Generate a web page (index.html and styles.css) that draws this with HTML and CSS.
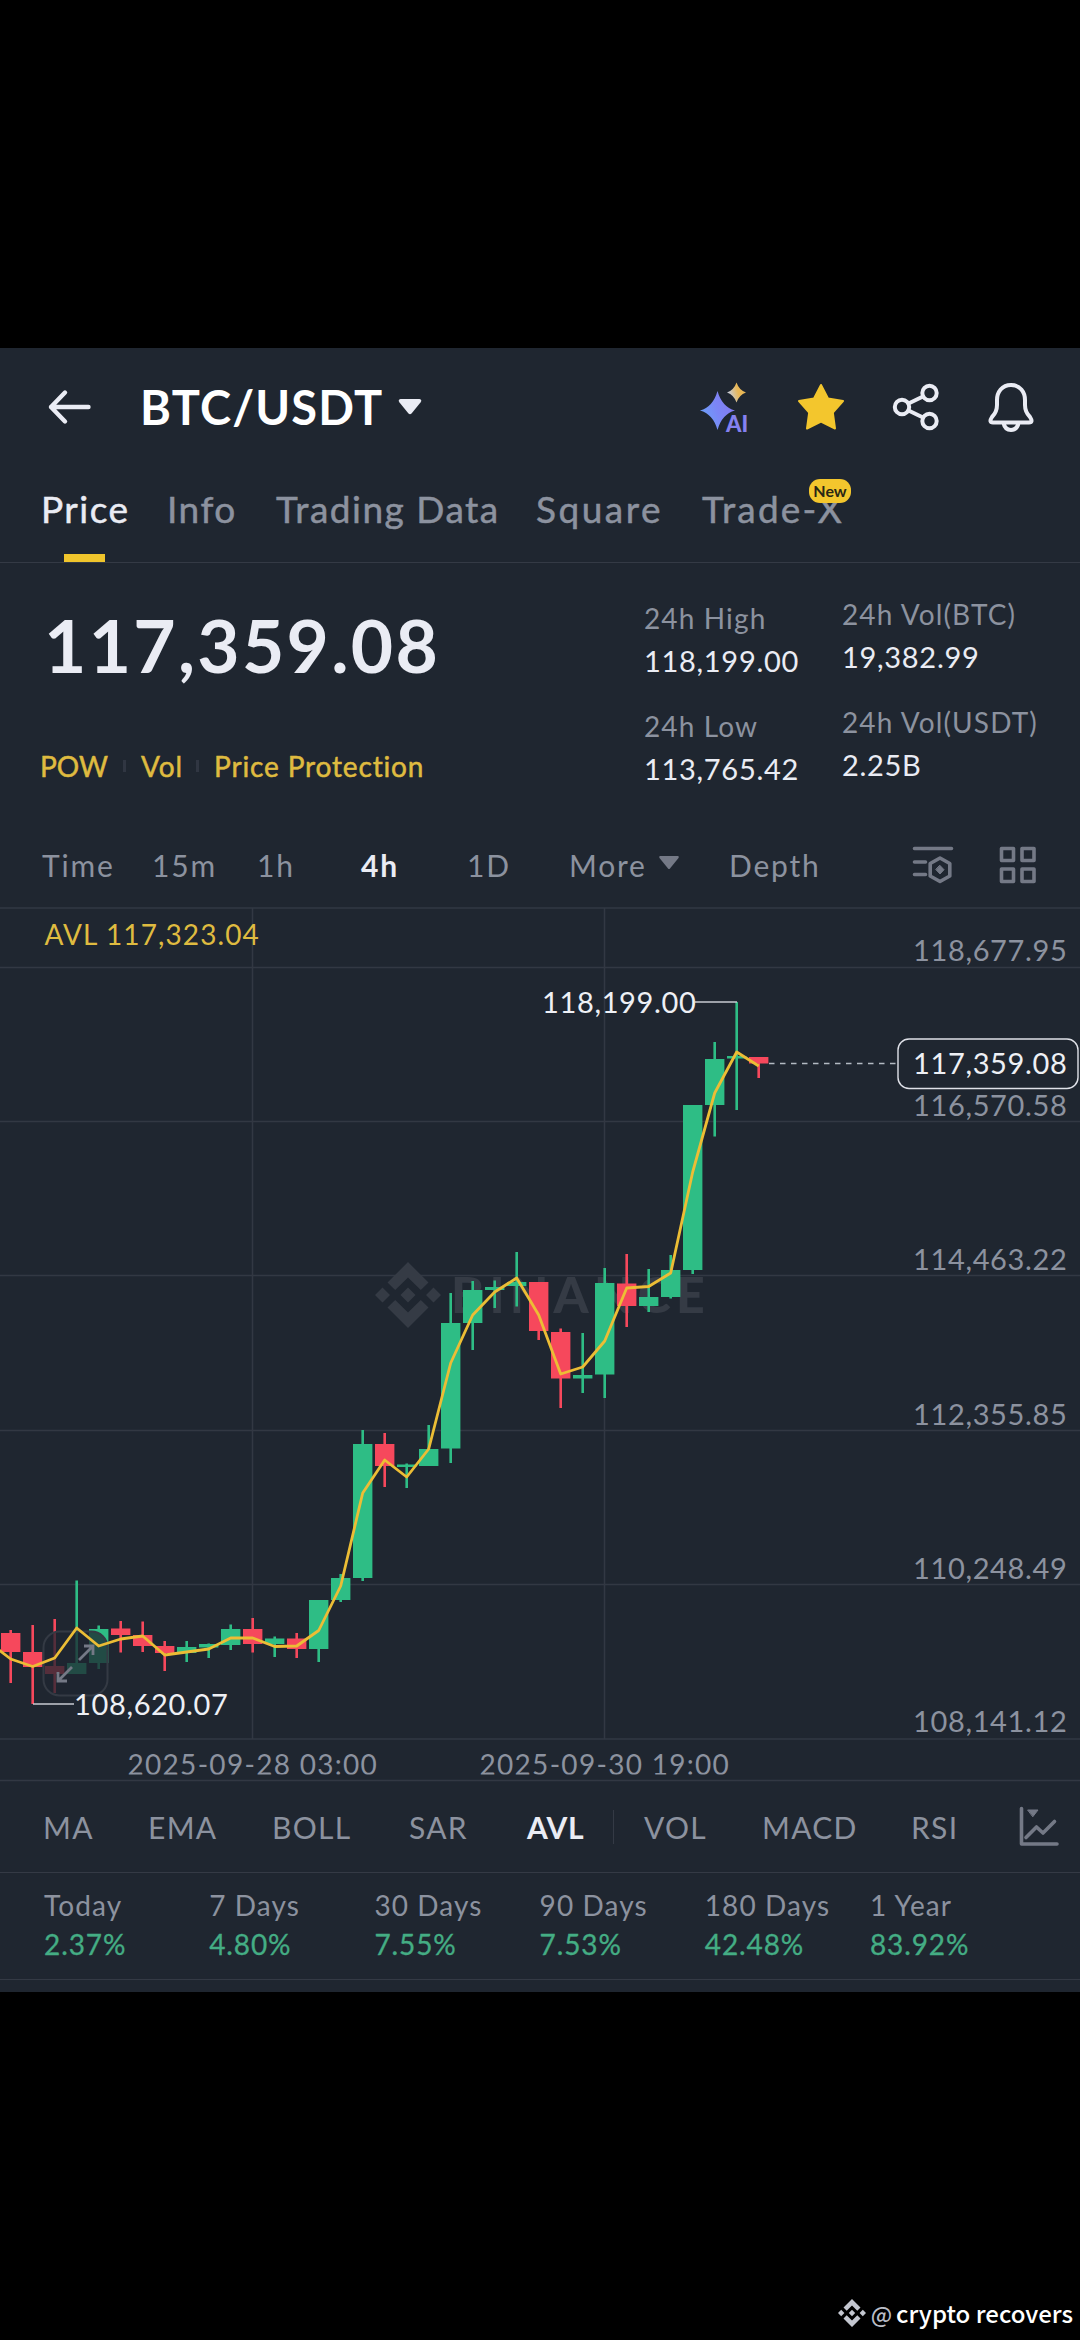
FILE: index.html
```html
<!DOCTYPE html>
<html lang="en">
<head>
<meta charset="utf-8">
<title>BTC/USDT</title>
<link rel="stylesheet" href="styles.css">
</head>
<body>
<main class="app">
  <header class="header">
    <svg class="back" width="44" height="36" viewBox="0 0 44 36"><path d="M3 18H40.500M17 3.500L3 18L17 32.500" /></svg>
    <h1 class="pair">BTC/USDT</h1>
    <svg class="caret" width="24" height="16" viewBox="0 0 24 16"><path d="M2.500 0H21.500Q24.500 .5 22.500 3.500L13.500 14.500Q12 16 10.500 14.500L1.500 3.500Q-.5 .5 2.500 0Z"/></svg>
    <div class="actions">
      <svg width="52" height="52" viewBox="0 0 52 52">
        <defs>
          <linearGradient id="spark" x1="0" y1=".7" x2="1" y2=".3"><stop offset="0" stop-color="#6aa2f8"/><stop offset=".5" stop-color="#7b86f6"/><stop offset="1" stop-color="#8579ee"/></linearGradient>
          <linearGradient id="gold" x1="0" y1=".7" x2="1" y2=".4"><stop offset=".15" stop-color="#c9cbd0"/><stop offset=".6" stop-color="#e8b757"/></linearGradient>
        </defs>
        <path fill="url(#spark)" d="M19.500 10Q24 26 37 29.500Q24 33 19.500 49Q15 33 2 29.500Q15 26 19.500 10Z"/>
        <path fill="url(#gold)" d="M38.500 1.500Q41 9 48 11.500Q41 14 38.500 21.500Q36 14 29 11.500Q36 9 38.500 1.500Z"/>
        <text class="ai" x="28" y="50.500">AI</text>
      </svg>
      <svg width="48" height="48" viewBox="0 0 48 48"><path class="star" d="M24 2L31 15.500L46 18L35.800 29.500L38 45.500L24 38.500L10 45.500L12.200 29.500L2 18L17 15.500Z"/></svg>
      <svg class="line-icon" width="48" height="48" viewBox="0 0 48 48"><circle cx="10" cy="24" r="7.200"/><circle cx="37.500" cy="10" r="7.200"/><circle cx="37.500" cy="38" r="7.200"/><path d="M16.500 20.500L31 13.500M16.500 27.500L31 34.500"/></svg>
      <svg class="line-icon" width="48" height="52" viewBox="0 0 48 52"><path d="M24 4C15 4 10 11 10 19V24Q10 31 5 36Q1.500 41.500 6 41.500H42Q46.500 41.500 43 36Q38 31 38 24V19C38 11 33 4 24 4ZM16.500 42Q18 49 24 49Q30 49 31.500 42"/></svg>
    </div>
  </header>

  <nav class="tabs">
    <span class="tab active">Price</span><span class="tab">Info</span><span class="tab">Trading Data</span><span class="tab square">Square</span><span class="tab">Trade-X<b class="badge">New</b></span>
  </nav>

  <section class="summary">
    <div class="last">
      <div class="price">117,359.08</div>
      <div class="tags"><span>POW</span><i></i><span>Vol</span><i></i><span>Price Protection</span></div>
    </div>
    <dl class="stats">
      <dt>24h High</dt><dd>118,199.00</dd>
      <dt>24h Low</dt><dd>113,765.42</dd>
    </dl>
    <dl class="stats raised">
      <dt>24h Vol(BTC)</dt><dd>19,382.99</dd>
      <dt>24h Vol(USDT)</dt><dd>2.25B</dd>
    </dl>
  </section>

  <nav class="intervals">
    <span>Time</span><span>15m</span><span>1h</span><span class="on">4h</span><span>1D</span>
    <span class="more">More<svg width="20" height="14" viewBox="0 0 20 14"><path d="M1 0H19Q20.500 .5 19.500 2L11 12.500Q10 13.500 9 12.500L.5 2Q-.5 .5 1 0Z"/></svg></span>
    <span>Depth</span>
    <svg class="tool" width="40" height="40" viewBox="0 0 40 40"><path d="M1.500 3.500H38.500M1.500 17H12.500M1.500 29.500H12.500M27 13L36.800 18.500V31L27 36.500L17.200 31V18.500Z"/><path class="solid" d="M27 20.500L31 24.700L27 29L23 24.700Z"/></svg>
    <svg class="tool" width="40" height="40" viewBox="0 0 40 40"><path d="M3.500 3.500H15.500V15.500H3.500ZM24 3.500H36V15.500H24ZM3.500 24H15.500V36.500H3.500ZM24 24H36V36.500H24Z"/></svg>
  </nav>

  <svg class="chart" width="1080" height="874" viewBox="0 907 1080 874">
    <path class="grid" d="M0 908H1080M0 967.500H1080M0 1121.500H1080M0 1275.500H1080M0 1430.500H1080M0 1584.500H1080M0 1739H1080M0 1780.500H1080M252.500 908V1739M604.500 908V1739"/>
    <g class="watermark">
      <path d="M408 1262L428.500 1282.500L420.800 1290L408 1277.500L395.200 1290L387.500 1282.500ZM408 1328L428.500 1307.500L420.800 1300L408 1312.500L395.200 1300L387.500 1307.500ZM408 1287.500L415.500 1295L408 1302.500L400.500 1295ZM382.500 1287.500L390 1295L382.500 1302.500L375 1295ZM433.500 1287.500L441 1295L433.500 1302.500L426 1295Z"/>
      <text x="451" y="1313">BINANCE</text>
    </g>
    <g id="candles"></g>
    <rect class="expand" x="43.500" y="1631.500" width="64" height="64" rx="16"/>
    <path class="arrows" d="M79 1660L93 1646M84 1646H93V1655M72 1667L58 1681M58 1672V1681H67"/>
    <polyline class="avl" id="avl"/>
    <path class="lead" d="M695 1002H737M33 1704H74"/>
    <path class="dash" d="M769 1063.500H897"/>
    <rect class="tag" x="898" y="1039" width="180" height="49.500" rx="11"/>
    <g class="axis">
      <text x="913" y="961">118,677.95</text>
      <text x="913" y="1116">116,570.58</text>
      <text x="913" y="1270">114,463.22</text>
      <text x="913" y="1424.500">112,355.85</text>
      <text x="913" y="1579">110,248.49</text>
      <text x="913" y="1731.500">108,141.12</text>
    </g>
    <g class="mark">
      <text x="913" y="1074">117,359.08</text>
      <text x="542" y="1013">118,199.00</text>
      <text x="74" y="1715">108,620.07</text>
    </g>
    <text class="avl-label" x="44.500" y="945">AVL 117,323.04</text>
    <svg x="0" y="1740" width="1080" height="34.500"><g class="dates"><text x="127.500" y="35">2025-09-28 03:00</text><text x="479.500" y="35">2025-09-30 19:00</text></g></svg>
  </svg>

  <nav class="indicators">
    <span>MA</span><span>EMA</span><span>BOLL</span><span>SAR</span><span class="on">AVL</span><i></i><span>VOL</span><span>MACD</span><span>RSI</span>
    <svg class="tool" width="40" height="40" viewBox="0 0 40 40"><path d="M2.500 1.500V37H38M7 30.500L17.500 20L24 26L35.500 14.500"/><path class="solid" d="M9 3H19L14 9.500Z"/></svg>
  </nav>

  <section class="periods">
    <div>Today<b>2.37%</b></div><div>7 Days<b>4.80%</b></div><div>30 Days<b>7.55%</b></div><div>90 Days<b>7.53%</b></div><div>180 Days<b>42.48%</b></div><div>1 Year<b>83.92%</b></div>
  </section>
</main>
<footer class="credit">
  <svg width="28" height="28" viewBox="0 0 28 28"><path d="M14 0L22.500 8.500L19.300 11.700L14 6.400L8.700 11.700L5.500 8.500ZM14 28L22.500 19.500L19.300 16.300L14 21.600L8.700 16.300L5.500 19.500ZM14 10.800L17.200 14L14 17.200L10.800 14ZM3.200 10.800L6.400 14L3.200 17.200L0 14ZM24.800 10.800L28 14L24.800 17.200L21.600 14Z"/></svg>
  <span class="at">@</span><span>crypto recovers</span>
</footer>
<script src="chart.js"></script>
</body>
</html>
```
FILE: styles.css
```css
* { box-sizing: border-box; }
body {
  margin: 0;
  padding-top: 348px;
  height: 2340px;
  background: #000;
  color: #8c929f;
  font-family: Lato, "Liberation Sans", sans-serif;
  display: flex;
  flex-direction: column;
  overflow: hidden;
}
.app { height: 1644px; background: #1f2630; display: flex; flex-direction: column; flex: none; }
svg { display: block; flex: none; overflow: visible; }
svg svg { overflow: hidden; }

.header { height: 118px; padding: 0 45px 0 48px; display: flex; align-items: center; }
.back { fill: none; stroke: #eaecf4; stroke-width: 4.400; stroke-linecap: round; stroke-linejoin: round; }
.pair { margin: 0 0 0 48px; width: 258px; font-size: 47px; line-height: 56px; font-weight: 700; letter-spacing: 1.150px; color: #fff; }
.caret { fill: #eaecf4; }
.actions { margin-left: auto; width: 337px; display: flex; justify-content: space-between; align-items: center; }
.ai { font: 900 22px Lato, sans-serif; fill: #8581f0; }
.star { fill: #f3c62d; stroke: #f3c62d; stroke-width: 2; stroke-linejoin: round; }
.line-icon { fill: none; stroke: #eaecf4; stroke-width: 4; stroke-linecap: round; stroke-linejoin: round; }

.tabs {
  height: 97px;
  padding: 21px 0 0 41px;
  border-bottom: 1px solid #343a45;
  display: grid;
  grid-template-columns: 126px 109px 260px 166px 150px;
  font-size: 37px;
  line-height: 44px;
  letter-spacing: 1.500px;
  -webkit-text-stroke: .5px;
}
.tab { position: relative; white-space: nowrap; }
.tab:last-child { letter-spacing: 2.200px; }
.square { letter-spacing: 2.500px; }
.active { color: #eaecf4; }
.active::after { content: ""; position: absolute; left: 23px; top: 67px; width: 41px; height: 8px; background: #f0c52c; }
.badge {
  position: absolute;
  left: 107px;
  top: -8px;
  width: 42px;
  height: 24px;
  border-radius: 11px;
  background: #f3c62d;
  color: #2a2715;
  font-size: 16px;
  line-height: 24px;
  font-weight: 700;
  letter-spacing: 0;
  text-align: center;
  -webkit-text-stroke: 0;
}

.summary { height: 262px; padding-left: 42px; display: grid; grid-template-columns: 602px 198px 1fr; }
.last { padding-top: 40px; }
.price { margin-left: 2px; font-size: 73px; line-height: 84px; font-weight: 700; letter-spacing: 2.300px; color: #eaecf4; }
.tags { margin: 62px 0 0 -2px; display: flex; align-items: center; font-size: 28px; line-height: 34px; letter-spacing: .850px; color: #dfbb40; -webkit-text-stroke: .5px; }
.tags span:first-child { letter-spacing: 0; width: 83px; }
.tags i { width: 3px; height: 12px; background: #303642; }
.tags i + span { margin-left: 15px; }
.tags span:nth-child(3) { width: 55px; }
.stats { margin: 0; padding-top: 38px; font-size: 28px; line-height: 34px; letter-spacing: 1.130px; }
.raised { padding-top: 34px; }
.stats dd { margin: 9px 0 31px; font-size: 29px; letter-spacing: .700px; color: #eaecf4; }

.intervals {
  height: 82px;
  padding: 0 0 2px 42px;
  display: grid;
  grid-template-columns: 110px 105px 104px 106px 102px 160px 184px 85px 40px;
  align-items: center;
  font-size: 30px;
  line-height: 36px;
  letter-spacing: 1.800px;
}
.on { font-weight: 700; color: #eaecf4; }
.more { display: flex; align-items: center; }
.more svg { margin: -4px 0 0 12px; fill: #747986; }
.tool { fill: none; stroke: #747986; stroke-width: 3.600; stroke-linecap: round; stroke-linejoin: round; }
.solid { fill: #747986; stroke-width: 1; }

.chart text { font-family: Lato, sans-serif; font-size: 29px; letter-spacing: .650px; }
.grid { fill: none; stroke: #323843; stroke-width: 1.500; }
.watermark { fill: #353b45; }
.chart .watermark text { font-size: 50px; font-weight: 900; letter-spacing: 5.200px; }
.up { fill: #2ebd85; }
.down { fill: #f6485c; }
.expand { fill: #1f2630; fill-opacity: .75; stroke: #343a44; stroke-width: 2; }
.arrows { fill: none; stroke: #747986; stroke-width: 2.800; }
.avl { fill: none; stroke: #ecbd35; stroke-width: 2.800; stroke-linejoin: round; }
.lead { stroke: #c7cad1; stroke-width: 1.700; }
.dash { stroke: #b3bac2; stroke-width: 1.500; stroke-dasharray: 5.500 5.500; }
.tag { fill: #1f2630; stroke: #dfe1e8; stroke-width: 1.400; }
.axis { fill: #8c929f; }
.mark { fill: #eef0f5; }
.chart .avl-label { font-size: 28px; letter-spacing: 1.100px; fill: #dfbb40; }
.chart .dates text { font-size: 28px; letter-spacing: 1.300px; fill: #8c929f; }

.indicators {
  height: 92px;
  padding-left: 43px;
  display: grid;
  grid-template-columns: 105px 124px 137px 118px 86px 31px 118px 149px 108px 40px;
  align-items: center;
  font-size: 30px;
  line-height: 36px;
  letter-spacing: 1.300px;
  border-bottom: 1px solid #343a45;
}
.indicators i { width: 1px; height: 34px; background: #343a45; }
.indicators .on { letter-spacing: .500px; }

.periods {
  height: 107px;
  padding: 15px 0 0 44px;
  display: grid;
  grid-template-columns: repeat(6, 165.200px);
  font-size: 28px;
  line-height: 34px;
  letter-spacing: 1.100px;
  border-bottom: 1px solid #343a45;
}
.periods b { display: block; margin-top: 5px; font-weight: 400; letter-spacing: .900px; color: #44ad84; -webkit-text-stroke: .3px; }

.credit {
  margin-top: auto;
  height: 52px;
  padding: 0 7px 2px 0;
  display: flex;
  align-items: center;
  justify-content: flex-end;
  font: 500 24px/36px "Noto Sans CJK SC", "Noto Sans", sans-serif;
  color: #fff;
}
.credit svg { fill: #c4c7d0; }
.at { margin: 0 4px 0 5px; font-size: 22px; color: #b9bcc6; }
```
FILE: chart.js
```
// Each candle: high, body top, body bottom, low (all in chart y units), direction.
const candles = [
  [1630, 1633, 1652, 1683, 0], [1625, 1652, 1667, 1704, 0], [1619, 1666, 1674, 1693, 0],
  [1580.5, 1663, 1674, 1674, 1], [1625.5, 1629, 1663, 1669, 1], [1621, 1628.5, 1635, 1652.5, 0],
  [1621.5, 1635, 1646, 1652, 0], [1641, 1646, 1653, 1671, 0], [1641, 1647, 1653, 1662, 1],
  [1643.5, 1644, 1647.5, 1658, 1], [1624.5, 1629, 1645, 1650, 1], [1618, 1629, 1644, 1652.5, 0],
  [1636.5, 1638.5, 1644, 1657, 1], [1633, 1638.5, 1649, 1658, 0], [1600, 1600, 1649, 1662, 1],
  [1574, 1578, 1600, 1602, 1], [1430, 1444, 1578, 1581, 1], [1433, 1444, 1466, 1487, 0],
  [1463.5, 1464.5, 1467, 1488, 1], [1425, 1449, 1466, 1466, 1], [1293, 1323, 1448.5, 1463, 1],
  [1281, 1290, 1323, 1350, 1], [1280.5, 1287, 1290, 1308, 1], [1252, 1282, 1286, 1306.5, 1],
  [1282, 1282, 1331, 1340, 0], [1328.5, 1332, 1378.5, 1408, 0], [1333, 1375, 1378.5, 1393, 1],
  [1268, 1283, 1374.5, 1398, 1], [1254, 1283.5, 1306, 1327, 0], [1269, 1297, 1306, 1312, 1],
  [1255, 1270, 1297, 1298.5, 1], [1105, 1105, 1270, 1274, 1], [1042, 1059, 1105, 1136.5, 1],
  [1002, 1056, 1058.5, 1110, 1], [1057, 1057, 1063.5, 1078, 0]
];
const average = [1659, 1666.5, 1658, 1628, 1646, 1639, 1636, 1655, 1652, 1649, 1638, 1638, 1646.5,
  1646, 1630.5, 1586, 1493, 1460, 1477, 1449, 1363, 1315, 1292, 1278, 1315, 1374, 1367, 1341, 1288,
  1286.5, 1273, 1172, 1093, 1052, 1066];
const centre = i => 10.7 + 22 * i;

document.getElementById('candles').innerHTML = candles.map(([high, top, bottom, low, up], i) =>
  `<path class="${up ? 'up' : 'down'}" d="M${centre(i) - 9.7} ${top}h19.400v${bottom - top}h-19.400zM${centre(i) - 1.3} ${high}h2.600v${low - high}h-2.600z"/>`
).join('');
document.getElementById('avl').setAttribute('points',
  '-1,1650 ' + average.map((y, i) => `${centre(i)},${y}`).join(' '));
```
